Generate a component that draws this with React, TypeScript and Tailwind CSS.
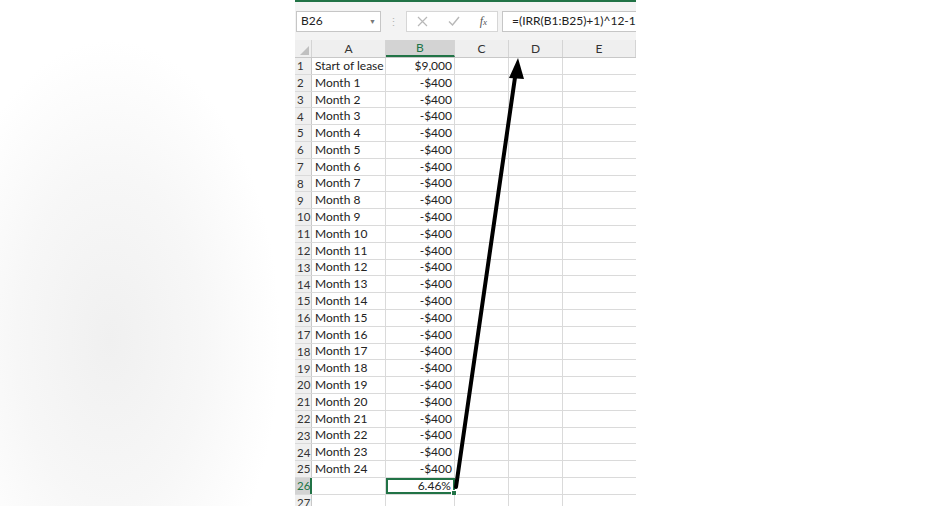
import React from 'react';

const cols = [
  { key: 'A', w: 'w-[74px]' },
  { key: 'B', w: 'w-[69px]' },
  { key: 'C', w: 'w-[54px]' },
  { key: 'D', w: 'w-[54px]' },
  { key: 'E', w: 'w-[73px]' },
];

const rows: { a: string; b: string }[] = [
  { a: 'Start of lease', b: '$9,000' },
  ...Array.from({ length: 24 }, (_, i) => ({ a: `Month ${i + 1}`, b: '-$400' })),
  { a: '', b: '6.46%' },
  { a: '', b: '' },
];

export default function App() {
  return (
    <div
      className="relative w-[931px] h-[506px] overflow-hidden bg-white bg-[radial-gradient(ellipse_170px_300px_at_110px_340px,#f0f0f0,#f7f7f7_55%,#ffffff_100%)]"
      style={{ fontFamily: 'Lato, "Noto Sans", sans-serif' }}
    >
      <div className="ml-[295px] w-[341px] h-full flex flex-col bg-white overflow-hidden text-[12px] text-[#222]">
        {/* green ribbon edge */}
        <div className="h-[2px] shrink-0 bg-[#217346]" />

        {/* formula bar */}
        <div className="h-[38px] shrink-0 bg-[#f3f3f3] flex items-center pl-[1px]">
          <div className="w-[85px] h-[21px] bg-white border border-[#c6c6c6] flex items-center justify-between px-[4px]">
            <span>B26</span>
            <span className="text-[7px] text-[#777]">▼</span>
          </div>
          <div className="w-[25px] flex justify-center text-[#b5b5b5] text-[11px] leading-none">⋮</div>
          <div className="w-[92px] h-[21px] bg-white border border-[#d6d6d6] flex items-center justify-around">
            <svg width="11" height="11" viewBox="0 0 11 11" stroke="#b8b8b8" strokeWidth="1.2">
              <path d="M1 1L10 10M10 1L1 10" />
            </svg>
            <svg width="12" height="10" viewBox="0 0 12 10" fill="none" stroke="#b8b8b8" strokeWidth="1.4">
              <path d="M1 5.5L4.5 9L11 1" />
            </svg>
            <span className="italic text-[#555] text-[12px]" style={{ fontFamily: '"Liberation Serif", serif' }}>
              f<span className="text-[9px]">x</span>
            </span>
          </div>
          <div className="ml-[4px] flex-1 min-w-0 h-[21px] bg-white border border-[#c6c6c6] border-r-0 flex items-center pl-[9px] text-[12px] whitespace-nowrap overflow-hidden">
            =(IRR(B1:B25)+1)^12-1
          </div>
        </div>

        {/* column headers */}
        <div className="flex h-[18px] shrink-0 bg-[#efefef] border-b border-[#c8c8c8]">
          <div className="w-[17px] shrink-0 border-r border-[#d4d4d4] relative">
            <div className="absolute right-[2px] bottom-[2px] w-0 h-0 border-l-[9px] border-l-transparent border-b-[9px] border-b-[#c0c0c0]" />
          </div>
          {cols.map((c) => (
            <div
              key={c.key}
              className={`${c.w} shrink-0 flex items-center justify-center border-r border-[#d4d4d4] ${
                c.key === 'B'
                  ? 'bg-[#d3d3d3] text-[#217346] border-b-2 border-b-[#217346]'
                  : 'text-[#333]'
              }`}
            >
              {c.key}
            </div>
          ))}
        </div>

        {/* rows */}
        {rows.map((r, i) => {
          const n = i + 1;
          const sel = n === 26;
          return (
            <div key={n} className="flex h-[16.8px] shrink-0 border-b border-[#dadada]">
              <div
                className={`w-[17px] shrink-0 flex items-center pl-[2px] text-[11.5px] overflow-hidden ${
                  sel
                    ? 'bg-[#d3d3d3] text-[#217346] border-r-2 border-r-[#217346]'
                    : 'bg-[#efefef] text-[#333] border-r border-[#c8c8c8]'
                }`}
              >
                {n}
              </div>
              <div className="w-[74px] shrink-0 flex items-center pl-[3px] border-r border-[#dadada] whitespace-nowrap overflow-hidden">
                {r.a}
              </div>
              <div
                className={`w-[69px] shrink-0 flex items-center justify-end pr-[2px] relative ${
                  sel ? 'border-2 border-[#217346]' : 'border-r border-[#dadada]'
                }`}
              >
                {r.b}
                {sel && <div className="absolute -right-[4px] -bottom-[4px] w-[6px] h-[6px] bg-[#217346] border border-white" />}
              </div>
              <div className="w-[54px] shrink-0 border-r border-[#dadada]" />
              <div className="w-[54px] shrink-0 border-r border-[#dadada]" />
              <div className="w-[73px] shrink-0" />
            </div>
          );
        })}
      </div>

      {/* annotation arrow */}
      <svg className="absolute inset-0 pointer-events-none" width="931" height="506" viewBox="0 0 931 506">
        <line x1="456" y1="487" x2="515.5" y2="74" stroke="#000" strokeWidth="4" strokeLinecap="round" />
        <polygon points="518,58 509,78 524,79" fill="#000" />
      </svg>
    </div>
  );
}
